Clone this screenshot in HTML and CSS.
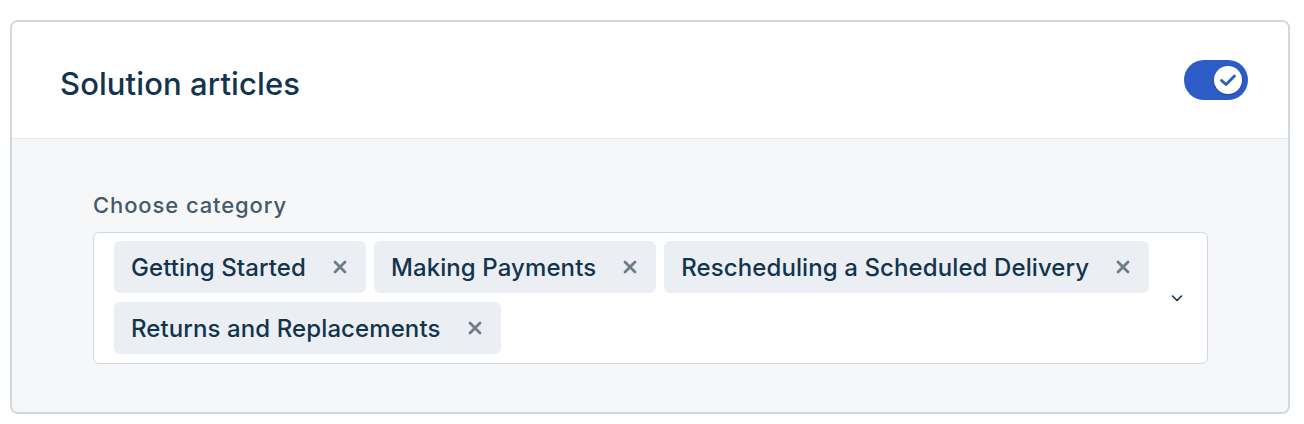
FILE: index.html
```html
<!DOCTYPE html>
<html>
<head>
<meta charset="utf-8">
<link rel="stylesheet" href="styles.css">
</head>
<body>
<div class="card">
  <div class="card-header">
    <h2 class="title">Solution articles</h2>
    <div class="toggle">
      <span class="knob">
        <svg width="20" height="20" viewBox="0 0 20 20"><path d="M3.5 10.5 L8 14.5 L16.5 6" fill="none" stroke="#2c5cc5" stroke-width="2.8" stroke-linecap="round" stroke-linejoin="round"/></svg>
      </span>
    </div>
  </div>
  <div class="card-body">
    <div class="label">Choose category</div>
    <div class="select">
      <div class="tags">
        <span class="tag">Getting Started<span class="close"><svg width="16" height="16" viewBox="0 0 16 16"><path d="M3 3 L13 13 M13 3 L3 13" stroke="#6f7c87" stroke-width="2.8" stroke-linecap="round"/></svg></span></span>
        <span class="tag">Making Payments<span class="close"><svg width="16" height="16" viewBox="0 0 16 16"><path d="M3 3 L13 13 M13 3 L3 13" stroke="#6f7c87" stroke-width="2.8" stroke-linecap="round"/></svg></span></span>
        <span class="tag">Rescheduling a Scheduled Delivery<span class="close"><svg width="16" height="16" viewBox="0 0 16 16"><path d="M3 3 L13 13 M13 3 L3 13" stroke="#6f7c87" stroke-width="2.8" stroke-linecap="round"/></svg></span></span>
        <span class="tag">Returns and Replacements<span class="close"><svg width="16" height="16" viewBox="0 0 16 16"><path d="M3 3 L13 13 M13 3 L3 13" stroke="#6f7c87" stroke-width="2.8" stroke-linecap="round"/></svg></span></span>
      </div>
      <span class="chevron"><svg width="14" height="10" viewBox="0 0 14 10"><path d="M2.5 3 L7 7.5 L11.5 3" fill="none" stroke="#12344d" stroke-width="1.6" stroke-linecap="round" stroke-linejoin="round"/></svg></span>
    </div>
  </div>
</div>
</body>
</html>
```
FILE: styles.css
```css
* { box-sizing: border-box; }
body {
  margin: 0;
  padding: 20px 14px 0 10px;
  background: #ffffff;
  font-family: Inter, "Noto Sans", sans-serif;
  color: #12344d;
}
.card {
  border: 2px solid #cfd7df;
  border-radius: 8px;
  overflow: hidden;
  height: 394px;
  display: flex;
  flex-direction: column;
}
.card-header {
  height: 117px;
  background: #fff;
  border-bottom: 1px solid #e6eaee;
  display: flex;
  align-items: center;
  justify-content: space-between;
  padding: 6px 40px 0 49px;
}
.title {
  margin: 0 0 0 -1px;
  font-size: 31px;
  font-weight: 500;
  color: #12344d;
  letter-spacing: 0.1px;
}
.toggle {
  width: 64px;
  height: 40px;
  margin-top: -6px;
  border-radius: 20px;
  background: #2c5cc5;
  display: flex;
  align-items: center;
  justify-content: flex-end;
  padding-right: 6px;
}
.knob {
  width: 28px;
  height: 28px;
  border-radius: 50%;
  background: #fff;
  display: flex;
  align-items: center;
  justify-content: center;
  box-shadow: 0 1px 2px rgba(0,0,0,0.25);
}
.card-body {
  flex: 1;
  background: #f5f7f9;
  padding: 53px 80px 0 81px;
}
.label {
  font-size: 22px;
  font-weight: 500;
  color: #475867;
  line-height: 26px;
  letter-spacing: 0.9px;
  margin-bottom: 14px;
}
.select {
  background: #fff;
  border: 1.5px solid #cfd7df;
  border-radius: 6px;
  display: flex;
  align-items: center;
  padding: 8px 23px 9px 20px;
}
.tags {
  flex: 1;
  display: flex;
  flex-wrap: wrap;
  gap: 9px 8px;
}
.tag {
  display: inline-flex;
  align-items: center;
  height: 52px;
  background: #ebeff3;
  border-radius: 6px;
  padding: 0 18px 0 17px;
  font-size: 24px;
  font-weight: 500;
  letter-spacing: 0.1px;
  color: #12344d;
}
.close {
  display: inline-flex;
  margin-left: 26px;
}
.chevron {
  display: inline-flex;
  margin-left: 6px;
}
```
